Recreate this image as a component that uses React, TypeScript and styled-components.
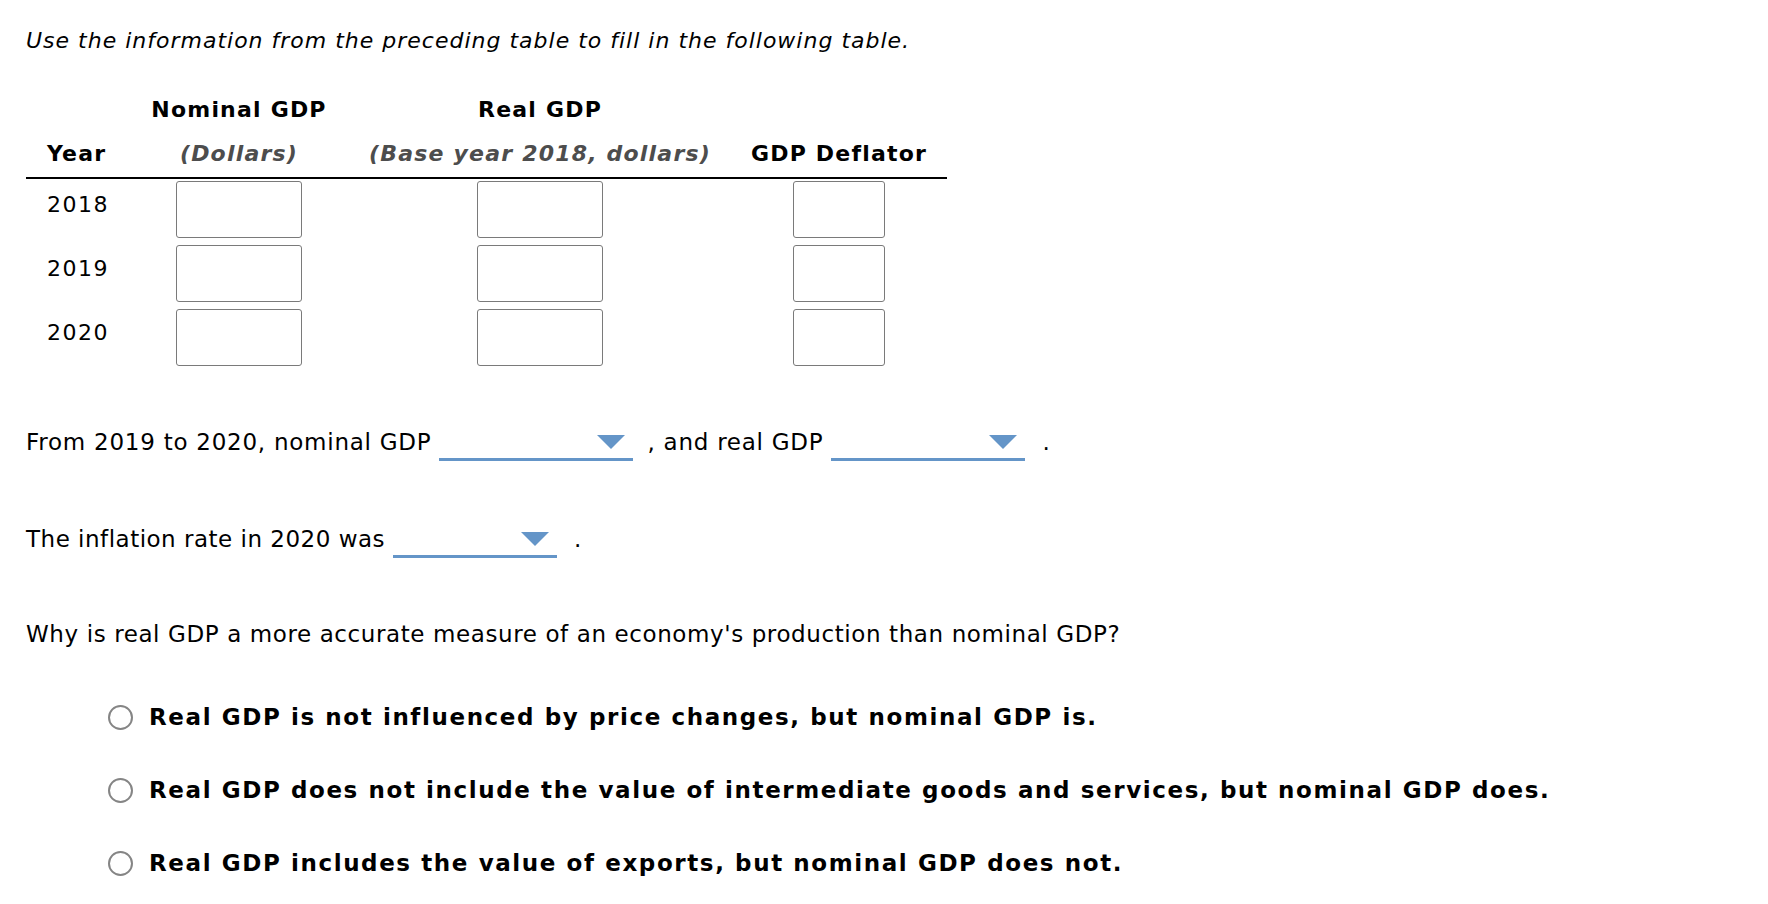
import React from "react";
import styled, { createGlobalStyle } from "styled-components";

const Global = createGlobalStyle`
  html, body { margin: 0; padding: 0; background: #fff; }
  body { font-family: "DejaVu Sans", Verdana, sans-serif; color: #000; }
`;

const Page = styled.div`
  padding: 27px 0 0 26px;
  font-size: 23px;
  line-height: 27px;
`;

const Instruction = styled.p`
  margin: 0;
  font-style: italic;
  font-size: 22px;
  letter-spacing: 1px;
`;

const Table = styled.div`
  margin-top: 33px;
  width: 921px;
  display: grid;
  grid-template-columns: 103px 220px 382px 216px;
`;

const HeadCell = styled.div<{ $muted?: boolean; $left?: boolean }>`
  font-weight: bold;
  font-size: 22px;
  letter-spacing: 1.2px;
  font-style: ${(p) => (p.$muted ? "italic" : "normal")};
  color: ${(p) => (p.$muted ? "#4d4d4d" : "#000")};
  padding-left: ${(p) => (p.$left ? "21px" : "0")};
  height: 44px;
  display: flex;
  align-items: center;
  justify-content: ${(p) => (p.$left ? "flex-start" : "center")};
`;

const Rule = styled.div`
  grid-column: 1 / -1;
  height: 2px;
  background: #000;
  margin: 2px 0;
`;

const YearCell = styled.div`
  padding: 10px 0 0 21px;
  font-size: 22px;
  letter-spacing: 1.5px;
  height: 64px;
  box-sizing: border-box;
`;

const InputCell = styled.div`
  display: flex;
  justify-content: center;
  height: 64px;
`;

const Box = styled.div<{ $w: number }>`
  width: ${(p) => p.$w}px;
  height: 57px;
  box-sizing: border-box;
  border: 1.5px solid #7a7a7a;
  border-radius: 3px;
  background: #fff;
`;

const Sentence = styled.div<{ $top: number; $ls: number }>`
  margin-top: ${(p) => p.$top}px;
  display: flex;
  align-items: flex-end;
  white-space: pre;
  letter-spacing: ${(p) => p.$ls}px;
`;

const Drop = styled.span<{ $w: number }>`
  position: relative;
  display: inline-block;
  width: ${(p) => p.$w}px;
  height: 30px;
  margin: 0 14px 0 8px;
  border-bottom: 3px solid #6495c8;
  top: 5px;
`;

const Arrow = styled.span`
  position: absolute;
  right: 8px;
  top: 7px;
  width: 0;
  height: 0;
  border-left: 14px solid transparent;
  border-right: 14px solid transparent;
  border-top: 14px solid #6495c8;
`;

const Period = styled.span`
  padding-left: 3px;
`;

const Question = styled.div`
  margin-top: 68px;
  letter-spacing: 0.6px;
`;

const Options = styled.div`
  margin-top: 56px;
  padding-left: 82px;
  display: flex;
  flex-direction: column;
  gap: 46px;
`;

const Option = styled.label`
  display: flex;
  align-items: center;
  gap: 16px;
  font-weight: bold;
  font-size: 23px;
  letter-spacing: 1.6px;
`;

const Radio = styled.span`
  width: 25px;
  height: 25px;
  box-sizing: border-box;
  border: 2px solid #858585;
  border-radius: 50%;
  flex: none;
`;

const years = ["2018", "2019", "2020"];
const options = [
  "Real GDP is not influenced by price changes, but nominal GDP is.",
  "Real GDP does not include the value of intermediate goods and services, but nominal GDP does.",
  "Real GDP includes the value of exports, but nominal GDP does not.",
];

export default function App() {
  return (
    <Page>
      <Global />
      <Instruction>Use the information from the preceding table to fill in the following table.</Instruction>
      <Table>
        <HeadCell />
        <HeadCell>Nominal GDP</HeadCell>
        <HeadCell>Real GDP</HeadCell>
        <HeadCell />
        <HeadCell $left>Year</HeadCell>
        <HeadCell $muted>(Dollars)</HeadCell>
        <HeadCell $muted>(Base year 2018, dollars)</HeadCell>
        <HeadCell>GDP Deflator</HeadCell>
        <Rule />
        {years.map((y) => (
          <React.Fragment key={y}>
            <YearCell>{y}</YearCell>
            <InputCell>
              <Box $w={126} />
            </InputCell>
            <InputCell>
              <Box $w={126} />
            </InputCell>
            <InputCell>
              <Box $w={92} />
            </InputCell>
          </React.Fragment>
        ))}
      </Table>
      <Sentence $top={50} $ls={0.75}>
        From 2019 to 2020, nominal GDP
        <Drop $w={194}>
          <Arrow />
        </Drop>
        , and real GDP
        <Drop $w={194}>
          <Arrow />
        </Drop>
        <Period>.</Period>
      </Sentence>
      <Sentence $top={64} $ls={0.5}>
        The inflation rate in 2020 was
        <Drop $w={164}>
          <Arrow />
        </Drop>
        <Period>.</Period>
      </Sentence>
      <Question>Why is real GDP a more accurate measure of an economy's production than nominal GDP?</Question>
      <Options>
        {options.map((o) => (
          <Option key={o}>
            <Radio />
            {o}
          </Option>
        ))}
      </Options>
    </Page>
  );
}
